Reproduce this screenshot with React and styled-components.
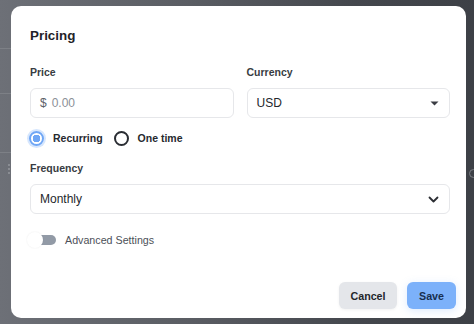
import React from "react";
import styled, { createGlobalStyle } from "styled-components";

const Global = createGlobalStyle`
  html, body { margin: 0; padding: 0; }
  body { width: 474px; height: 324px; overflow: hidden; font-family: "Liberation Sans", Arial, sans-serif; }
  * { box-sizing: border-box; }
`;

const Backdrop = styled.div`
  position: relative;
  width: 474px;
  height: 324px;
  padding: 6px 8px 6px 11px;
  display: flex;
  background: linear-gradient(90deg, #6d7077 0%, #5a5d63 40%, #44474d 75%, #3d4046 100%);
`;

const BgLine = styled.div`
  position: absolute;
  left: 0;
  top: ${(p) => p.$top}px;
  width: 11px;
  height: 1px;
  background: #7d8086;
`;

const BgDots = styled.div`
  position: absolute;
  left: 8px;
  top: 164px;
  width: 2px;
  height: 10px;
  background: repeating-linear-gradient(180deg, #8a8d93 0 2px, transparent 2px 4px);
`;

const BgRing = styled.div`
  position: absolute;
  right: -4px;
  top: 169px;
  width: 9px;
  height: 9px;
  border: 1.5px solid #7a7d83;
  border-radius: 50%;
`;

const Modal = styled.div`
  position: relative;
  z-index: 1;
  flex: 1;
  background: #ffffff;
  border-radius: 10px;
  padding: 20px 16px 9px 19px;
  display: flex;
  flex-direction: column;
`;

const Title = styled.h2`
  margin: 0;
  font-size: 13.4px;
  line-height: 20px;
  font-weight: 700;
  color: #1f2328;
`;

const FieldGrid = styled.div`
  margin-top: 18px;
  display: grid;
  grid-template-columns: 1fr 1fr;
  column-gap: 13px;
`;

const Field = styled.div`
  display: flex;
  flex-direction: column;
  gap: 8px;
  margin-top: ${(p) => p.$mt || 0}px;
`;

const Label = styled.label`
  font-size: 10.5px;
  line-height: 16px;
  font-weight: 700;
  color: #383c42;
`;

const Box = styled.div`
  height: 30px;
  border: 1px solid #e6e7ea;
  border-radius: 6px;
  display: flex;
  align-items: center;
  padding: 0 10px 0 9px;
  font-size: 12px;
  color: #24272c;
  justify-content: space-between;
`;

const Prefix = styled.span`
  color: #5d6168;
  margin-right: 5px;
`;

const Placeholder = styled.span`
  color: #8b9097;
`;

const RadioRow = styled.div`
  margin-top: 11px;
  height: 18px;
  display: flex;
  align-items: center;
  margin-left: -1px;
`;

const RadioItem = styled.div`
  display: flex;
  align-items: center;
  gap: 9px;
  margin-right: 11px;
  font-size: 10.5px;
  font-weight: 700;
  color: #26292e;
`;

const Radio = styled.span`
  width: 15px;
  height: 15px;
  border-radius: 50%;
  border: 2px solid ${(p) => (p.$checked ? "#6fa6f5" : "#2a2d33")};
  background: ${(p) => (p.$checked ? "radial-gradient(circle, #6fa6f5 0 3.6px, #ffffff 4px)" : "#fff")};
  box-shadow: ${(p) => (p.$checked ? "0 0 0 2px #d6e6fd" : "none")};
`;

const ToggleRow = styled.div`
  margin-top: 16px;
  height: 20px;
  display: flex;
  align-items: center;
  gap: 9px;
  margin-left: -3px;
`;

const Switch = styled.span`
  position: relative;
  width: 29px;
  height: 16px;
  display: inline-block;
`;

const Track = styled.span`
  position: absolute;
  left: 6px;
  right: 0;
  top: 3px;
  height: 10px;
  border-radius: 5px;
  background: #929aa6;
`;

const Knob = styled.span`
  position: absolute;
  left: 0;
  top: 0;
  width: 16px;
  height: 16px;
  border-radius: 50%;
  background: #fff;
  box-shadow: 0 0 2px rgba(0, 0, 0, 0.08);
`;

const ToggleLabel = styled.span`
  font-size: 10.7px;
  color: #4c5058;
`;

const Footer = styled.div`
  margin-top: auto;
  margin-right: -6px;
  display: flex;
  justify-content: flex-end;
  gap: 10px;
`;

const Button = styled.button`
  height: 27px;
  border: none;
  border-radius: 6px;
  padding: 0 ${(p) => (p.$primary ? 12 : 11.5)}px;
  font-family: inherit;
  font-size: 10.7px;
  font-weight: 700;
  background: ${(p) => (p.$primary ? "#7cb1fa" : "#e4e6ea")};
  color: ${(p) => (p.$primary ? "#182f50" : "#23262b")};
  box-shadow: ${(p) => (p.$primary ? "0 2px 8px rgba(124,177,250,0.25)" : "0 1px 3px rgba(0,0,0,0.06)")};
`;

const Caret = () => (
  <svg width="9" height="5" viewBox="0 0 9 5">
    <path d="M0.5 0.5 L8.5 0.5 L4.5 4.5 Z" fill="#3a3d43" />
  </svg>
);

const Chevron = () => (
  <svg width="11" height="7" viewBox="0 0 11 7">
    <path d="M1.5 1.5 L5.5 5.5 L9.5 1.5" fill="none" stroke="#2b2e33" strokeWidth="1.8" strokeLinecap="round" strokeLinejoin="round" />
  </svg>
);

export default function App() {
  return (
    <>
      <Global />
      <Backdrop>
        <BgLine $top={48} />
        <BgLine $top={93} />
        <BgLine $top={152} />
        <BgDots />
        <BgRing />
        <Modal>
          <Title>Pricing</Title>
          <FieldGrid>
            <Field>
              <Label>Price</Label>
              <Box>
                <span>
                  <Prefix>$</Prefix>
                  <Placeholder>0.00</Placeholder>
                </span>
              </Box>
            </Field>
            <Field>
              <Label>Currency</Label>
              <Box>
                <span>USD</span>
                <Caret />
              </Box>
            </Field>
          </FieldGrid>
          <RadioRow>
            <RadioItem>
              <Radio $checked />
              Recurring
            </RadioItem>
            <RadioItem>
              <Radio />
              One time
            </RadioItem>
          </RadioRow>
          <Field $mt={13}>
            <Label>Frequency</Label>
            <Box>
              <span>Monthly</span>
              <Chevron />
            </Box>
          </Field>
          <ToggleRow>
            <Switch>
              <Track />
              <Knob />
            </Switch>
            <ToggleLabel>Advanced Settings</ToggleLabel>
          </ToggleRow>
          <Footer>
            <Button>Cancel</Button>
            <Button $primary>Save</Button>
          </Footer>
        </Modal>
      </Backdrop>
    </>
  );
}
